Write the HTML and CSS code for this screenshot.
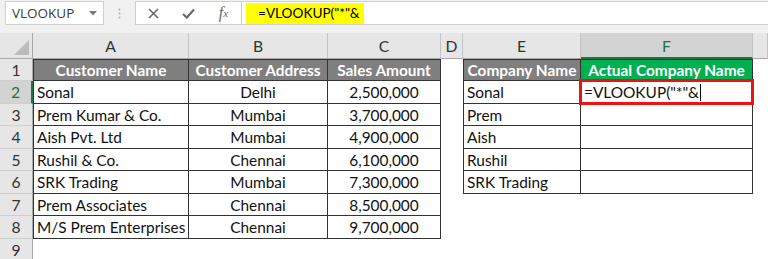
FILE: index.html
```html
<!DOCTYPE html>
<html>
<head>
<meta charset="utf-8">
<link rel="stylesheet" href="styles.css">
</head>
<body>
<div class="toolbar">
  <div class="namebox">
    <span>VLOOKUP</span>
    <svg class="caret" width="8" height="5" viewBox="0 0 8 5"><path d="M0 0H8L4 4.5Z" fill="#7a7a7a"/></svg>
  </div>
  <div class="dots">
    <svg width="3" height="11" viewBox="0 0 3 11"><circle cx="1.5" cy="1.5" r="1" fill="#b0b0b0"/><circle cx="1.5" cy="5.5" r="1" fill="#b0b0b0"/><circle cx="1.5" cy="9.5" r="1" fill="#b0b0b0"/></svg>
  </div>
  <div class="fbtns">
    <span class="slot"><svg width="11" height="11" viewBox="0 0 11 11"><path d="M1 1L10 10M10 1L1 10" stroke="#6a6a6a" stroke-width="1.6" fill="none"/></svg></span>
    <span class="slot"><svg width="13" height="11" viewBox="0 0 13 11"><path d="M1 6L4.8 9.6L12 1.5" stroke="#6a6a6a" stroke-width="2.2" fill="none"/></svg></span>
    <span class="slot fx"><i>f</i><sub>x</sub></span>
  </div>
  <div class="fbar"><span class="hl">=VLOOKUP("*"&amp;</span></div>
</div>

<div class="sheet">
  <div class="ch corner"><span class="tri"></span></div>
  <div class="ch">A</div>
  <div class="ch">B</div>
  <div class="ch">C</div>
  <div class="ch">D</div>
  <div class="ch">E</div>
  <div class="ch sel">F</div>
  <div class="ch"></div>

  <div class="rh">1</div>
  <div class="c t top left hd">Customer Name</div>
  <div class="c t top hd">Customer Address</div>
  <div class="c t top hd">Sales Amount</div>
  <div class="c"></div>
  <div class="c t top left hd">Company Name</div>
  <div class="c t top hd green">Actual Company Name</div>
  <div class="c"></div>

  <div class="rh sel">2</div>
  <div class="c t left">Sonal</div>
  <div class="c t ctr">Delhi</div>
  <div class="c t ctr">2,500,000</div>
  <div class="c"></div>
  <div class="c t left">Sonal</div>
  <div class="c t active">=VLOOKUP("*"&amp;<span class="cursor"></span><span class="redbox"></span></div>
  <div class="c"></div>

  <div class="rh">3</div>
  <div class="c t left">Prem Kumar &amp; Co.</div>
  <div class="c t ctr">Mumbai</div>
  <div class="c t ctr">3,700,000</div>
  <div class="c"></div>
  <div class="c t left">Prem</div>
  <div class="c t"></div>
  <div class="c"></div>

  <div class="rh">4</div>
  <div class="c t left">Aish Pvt. Ltd</div>
  <div class="c t ctr">Mumbai</div>
  <div class="c t ctr">4,900,000</div>
  <div class="c"></div>
  <div class="c t left">Aish</div>
  <div class="c t"></div>
  <div class="c"></div>

  <div class="rh">5</div>
  <div class="c t left">Rushil &amp; Co.</div>
  <div class="c t ctr">Chennai</div>
  <div class="c t ctr">6,100,000</div>
  <div class="c"></div>
  <div class="c t left">Rushil</div>
  <div class="c t"></div>
  <div class="c"></div>

  <div class="rh">6</div>
  <div class="c t left">SRK Trading</div>
  <div class="c t ctr">Mumbai</div>
  <div class="c t ctr">7,300,000</div>
  <div class="c"></div>
  <div class="c t left">SRK Trading</div>
  <div class="c t"></div>
  <div class="c"></div>

  <div class="rh">7</div>
  <div class="c t left">Prem Associates</div>
  <div class="c t ctr">Chennai</div>
  <div class="c t ctr">8,500,000</div>
  <div class="c"></div>
  <div class="c"></div>
  <div class="c"></div>
  <div class="c"></div>

  <div class="rh">8</div>
  <div class="c t left">M/S Prem Enterprises</div>
  <div class="c t ctr">Chennai</div>
  <div class="c t ctr">9,700,000</div>
  <div class="c"></div>
  <div class="c"></div>
  <div class="c"></div>
  <div class="c"></div>

  <div class="rh">9</div>
  <div class="c"></div>
  <div class="c"></div>
  <div class="c"></div>
  <div class="c"></div>
  <div class="c"></div>
  <div class="c"></div>
  <div class="c"></div>
</div>
</body>
</html>
```

FILE: styles.css
```css
html, body {
  margin: 0;
  padding: 0;
}
body {
  width: 768px;
  height: 259px;
  overflow: hidden;
  background: #f1f1f1;
  font-family: Lato, "Liberation Sans", sans-serif;
}

/* ---------- toolbar ---------- */
.toolbar {
  display: flex;
  align-items: flex-start;
  height: 33px;
  padding-top: 1px;
  box-sizing: border-box;
  background: #f1f1f1;
}
.namebox {
  margin-left: 5px;
  width: 99px;
  height: 24px;
  box-sizing: border-box;
  background: #fff;
  border: 1px solid #cfcfcf;
  display: flex;
  align-items: center;
  justify-content: space-between;
  padding: 0 6px 0 6px;
  font-family: "Open Sans", sans-serif;
  font-size: 13.5px;
  color: #3a3a3a;
}
.caret { margin-top: 1px; }
.dots {
  width: 31px;
  height: 24px;
  display: flex;
  justify-content: center;
  align-items: center;
}
.fbtns {
  width: 107px;
  height: 24px;
  box-sizing: border-box;
  background: #fff;
  border: 1px solid #cfcfcf;
  display: flex;
  align-items: center;
}
.slot {
  width: 35px;
  display: flex;
  justify-content: center;
  align-items: center;
}
.fx {
  font-family: "Liberation Serif", serif;
  color: #666;
  font-size: 16px;
  line-height: 1;
}
.fx sub {
  font-size: 11px;
  font-style: italic;
  vertical-align: -1px;
}
.fbar {
  flex: 1;
  height: 24px;
  box-sizing: border-box;
  background: #fff;
  border-top: 1px solid #cfcfcf;
  border-bottom: 1px solid #cfcfcf;
  padding-left: 4px;
  display: flex;
  align-items: flex-start;
}
.hl {
  flex: 0 0 118px;
  margin-top: 1px;
  width: 118px;
  height: 21px;
  box-sizing: border-box;
  padding-left: 12px;
  background: #ffff00;
  font-size: 13.6px;
  line-height: 21px;
  color: #000;
  white-space: nowrap;
}

/* ---------- sheet ---------- */
.sheet {
  display: grid;
  grid-template-columns: 33px 156px 139px 113px 22px 118px 172px 15px;
  grid-template-rows: 25.5px repeat(9, 22.5px);
  background: #fff;
  font-size: 15.4px;
}
.ch {
  background: #e6e6e6;
  border-right: 1px solid #c4c4c4;
  border-bottom: 1px solid #a9a9a9;
  box-sizing: border-box;
  display: flex;
  align-items: center;
  justify-content: center;
  color: #333;
  font-size: 15.7px;
  padding-top: 2px;
}
.ch.sel {
  background: #d3d3d3;
  color: #217346;
  border-bottom: 2px solid #217346;
}
.corner {
  position: relative;
  border-right: 1px solid #a9a9a9;
}
.tri {
  position: absolute;
  right: 3px;
  bottom: 3px;
  width: 0;
  height: 0;
  border-left: 15px solid transparent;
  border-bottom: 15px solid #bcbcbc;
}
.rh {
  background: #e6e6e6;
  border-right: 1px solid #a9a9a9;
  border-bottom: 1px solid #cfcfcf;
  box-sizing: border-box;
  display: flex;
  align-items: center;
  justify-content: center;
  color: #333;
  padding-top: 1px;
  font-size: 15.7px;
}
.rh.sel {
  background: #d3d3d3;
  color: #217346;
  border-right: 2px solid #217346;
}
.c {
  box-sizing: border-box;
  display: flex;
  align-items: center;
  padding: 1px 3px 0 3px;
  white-space: nowrap;
  color: #111;
  background: #fff;
}
.t {
  border-right: 1px solid #333;
  border-bottom: 1px solid #333;
}
.t.top { border-top: 1px solid #333; }
.t.left { border-left: 1px solid #333; }
.ctr { justify-content: center; }
.hd {
  background: #7f7f7f;
  color: #fff;
  font-weight: bold;
  justify-content: center;
}
.hd.green { background: #00b050; }
.active {
  position: relative;
  overflow: visible;
}
.cursor {
  display: inline-block;
  width: 1px;
  height: 17px;
  background: #000;
  margin-left: 1px;
}
.redbox {
  position: absolute;
  left: -2px;
  top: -2px;
  right: -2px;
  bottom: -2px;
  border: 3px solid #ee1111;
  pointer-events: none;
}
```
